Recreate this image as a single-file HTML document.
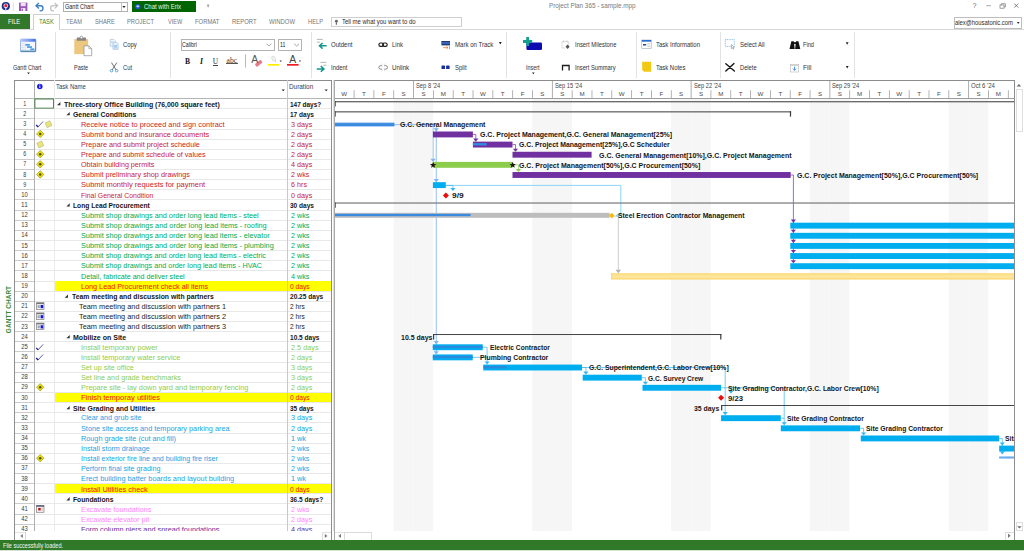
<!DOCTYPE html>
<html lang="en"><head><meta charset="utf-8"><title>Project Plan 365 - sample.mpp</title>
<style>
html,body{margin:0;padding:0;background:#fff;}
body{width:1024px;height:551px;overflow:hidden;font-family:"Liberation Sans",sans-serif;}
#app{position:relative;width:1024px;height:551px;overflow:hidden;background:#fff;}
.t{position:absolute;white-space:nowrap;transform-origin:left center;}
.r{position:absolute;}
svg{position:absolute;left:0;top:0;overflow:visible;}
.clip{position:absolute;overflow:hidden;}

</style></head>
<body>
<div id="app">
<svg width="1024" height="80">
<g transform="translate(0,0.4)"><!-- app logo -->
<circle cx="5.8" cy="5.8" r="4.1" fill="#1b2f8f"/>
<circle cx="5.8" cy="5.4" r="2.3" fill="#ffffff"/>
<circle cx="5.8" cy="5.3" r="1.6" fill="#e8202a"/>
<rect x="5.3" y="6.6" width="1" height="3" fill="#ffffff"/>
<rect x="12.9" y="2" width="0.6" height="8.6" fill="#c9c9c9"/>
<!-- save -->
<path d="M19 2.2 h8.4 v8.4 h-8.4z" fill="#9a55b8"/>
<rect x="20.7" y="2.2" width="5" height="3.6" fill="#efe2f5"/>
<rect x="21" y="7.6" width="4.4" height="3" fill="#f3e6f8"/>
<rect x="21.6" y="8.2" width="1.3" height="2.4" fill="#9a55b8"/>
<!-- undo -->
<path d="M36.2 5.3 h4.2 a2.6 2.6 0 0 1 0 5.2 h-0.8" fill="none" stroke="#3a7dc4" stroke-width="1.35"/>
<path d="M38.9 2.6 L36 5.3 L38.9 8" fill="none" stroke="#3a7dc4" stroke-width="1.35"/>
<!-- redo -->
<path d="M57.4 5.3 h-4.2 a2.6 2.6 0 0 0 0 5.2 h0.8" fill="none" stroke="#c2c2c2" stroke-width="1.25"/>
<path d="M54.7 2.6 L57.6 5.3 L54.7 8" fill="none" stroke="#c2c2c2" stroke-width="1.25"/>
</g></svg>
<div class="r" style="left:63.40px;top:1.50px;width:64.50px;height:10.60px;background:#ffffff;border:0.7px solid #b0b0b0;box-sizing:border-box;"></div>
<div class="r" style="left:120.60px;top:2.20px;width:0.60px;height:9.20px;background:#c0c0c0;"></div>
<div class="t" style="top:2.92px;font-size:6.9px;line-height:8.97px;color:#222;left:65.00px;transform:scaleX(0.8000);">Gantt Chart</div>
<svg width="1024" height="20"><path d="M122.4 6 h3.2 l-1.6 2z" fill="#222"/></svg>
<div class="r" style="left:131.90px;top:1.20px;width:64.00px;height:10.70px;background:#006400;"></div>
<svg width="1024" height="20"><circle cx="137.8" cy="6.6" r="2.7" fill="#2b50d8"/><ellipse cx="137.8" cy="6.3" rx="1.5" ry="1.1" fill="#bcd0ff"/><path d="M206.9 5.3 h2.4 l-1.2 2.2z" fill="#888"/><rect x="207.2" y="4.2" width="1.8" height="0.5" fill="#999"/></svg>
<div class="t" style="top:3.01px;font-size:6.9px;line-height:8.97px;color:#e8f3e8;left:144.00px;transform:scaleX(0.8703);">Chat with Erix</div>
<div class="t" style="top:1.64px;font-size:6.4px;line-height:8.32px;color:#7a7a7a;left:548.80px;transform:scaleX(0.9898);">Project Plan 365 - sample.mpp</div>
<div class="t" style="top:1.32px;font-size:7.2px;line-height:9.36px;color:#6a6a6a;left:824.60px;width:300px;text-align:center;"><span style="display:inline-block;transform-origin:center center;">?</span></div>
<svg width="1024" height="20">
<rect x="986.3" y="5.4" width="4.6" height="0.75" fill="#8a8a8a"/>
<rect x="1000" y="5" width="4" height="3.2" fill="#fff" stroke="#777" stroke-width="0.7"/>
<path d="M1001.4 5 v-1.3 h4 v3.2 h-1.4" fill="none" stroke="#777" stroke-width="0.7"/>
<path d="M1014.3 3.6 l4 4 M1018.3 3.6 l-4 4" stroke="#666" stroke-width="0.8"/>
</svg>
<div class="r" style="left:0.00px;top:13.80px;width:29.90px;height:16.00px;background:#31782a;"></div>
<div class="t" style="top:18.17px;font-size:6.5px;line-height:8.45px;color:#ffffff;left:8.20px;transform:scaleX(0.8883);">FILE</div>
<div class="r" style="left:0.00px;top:29.20px;width:1024.00px;height:0.70px;background:#d8d8d8;"></div>
<div class="r" style="left:32.60px;top:14.20px;width:27.00px;height:15.80px;background:#ffffff;border:0.7px solid #d0d0d0;border-bottom:none;box-sizing:border-box;"></div>
<div class="t" style="top:18.17px;font-size:6.5px;line-height:8.45px;color:#3b8a3b;left:38.80px;transform:scaleX(0.8970);">TASK</div>
<div class="t" style="top:18.17px;font-size:6.5px;line-height:8.45px;color:#767676;left:66.00px;transform:scaleX(0.8858);">TEAM</div>
<div class="t" style="top:18.17px;font-size:6.5px;line-height:8.45px;color:#767676;left:94.60px;transform:scaleX(0.8837);">SHARE</div>
<div class="t" style="top:18.17px;font-size:6.5px;line-height:8.45px;color:#767676;left:127.00px;transform:scaleX(0.8898);">PROJECT</div>
<div class="t" style="top:18.17px;font-size:6.5px;line-height:8.45px;color:#767676;left:167.50px;transform:scaleX(0.8602);">VIEW</div>
<div class="t" style="top:18.17px;font-size:6.5px;line-height:8.45px;color:#767676;left:194.60px;transform:scaleX(0.9048);">FORMAT</div>
<div class="t" style="top:18.17px;font-size:6.5px;line-height:8.45px;color:#767676;left:232.00px;transform:scaleX(0.9122);">REPORT</div>
<div class="t" style="top:18.17px;font-size:6.5px;line-height:8.45px;color:#767676;left:269.00px;transform:scaleX(0.9113);">WINDOW</div>
<div class="t" style="top:18.17px;font-size:6.5px;line-height:8.45px;color:#767676;left:307.60px;transform:scaleX(0.8832);">HELP</div>
<div class="r" style="left:331.40px;top:17.20px;width:130.80px;height:10.30px;background:#ffffff;border:0.7px solid #cfcfcf;box-sizing:border-box;"></div>
<svg width="1024" height="40"><circle cx="336.4" cy="21.2" r="1.45" fill="#666"/><rect x="335.8" y="22.4" width="1.2" height="2.3" fill="#666"/></svg>
<div class="t" style="top:18.08px;font-size:6.8px;line-height:8.84px;color:#2c2c2c;left:341.60px;transform:scaleX(0.8775);">Tell me what you want to do</div>
<div class="r" style="left:953.50px;top:17.20px;width:68.20px;height:11.40px;background:#ffffff;border:0.7px solid #bdbdbd;box-sizing:border-box;"></div>
<div class="t" style="top:18.95px;font-size:6.7px;line-height:8.71px;color:#2a2a2a;left:955.20px;transform:scaleX(0.8800);">alex@housatonic.com</div>
<svg width="1024" height="40"><path d="M1016.8 22 h2.8 l-1.4 2z" fill="#333"/></svg>
<div class="r" style="left:54.60px;top:31.60px;width:0.70px;height:46.00px;background:#e3e3e3;"></div>
<div class="r" style="left:169.70px;top:31.60px;width:0.70px;height:46.00px;background:#e3e3e3;"></div>
<div class="r" style="left:311.30px;top:31.60px;width:0.70px;height:46.00px;background:#e3e3e3;"></div>
<div class="r" style="left:505.70px;top:31.60px;width:0.70px;height:46.00px;background:#e3e3e3;"></div>
<div class="r" style="left:636.30px;top:31.60px;width:0.70px;height:46.00px;background:#e3e3e3;"></div>
<div class="r" style="left:720.40px;top:31.60px;width:0.70px;height:46.00px;background:#e3e3e3;"></div>
<div class="r" style="left:854.30px;top:31.60px;width:0.70px;height:46.00px;background:#e3e3e3;"></div>
<svg width="1024" height="80">
<defs><linearGradient id="gt" x1="0" x2="1" y1="0" y2="0"><stop offset="0" stop-color="#b9c8fa"/><stop offset="0.55" stop-color="#7f9cf2"/><stop offset="1" stop-color="#3f6ee8"/></linearGradient></defs>
<rect x="20.5" y="39.1" width="15.4" height="12.7" rx="1" fill="#f3f6fb" stroke="#5b8fd8" stroke-width="0.6"/>
<rect x="20.5" y="39.1" width="15.4" height="2.7" rx="0.8" fill="url(#gt)"/>
<rect x="20.6" y="50.6" width="15.2" height="1.2" fill="#3e7ca6"/>
<rect x="35.1" y="41.6" width="0.8" height="9.4" fill="#4a86d8"/>
<path d="M21.4 43.6 h3 M21.4 45.6 h3 M21.4 47.6 h3 M21.4 49.4 h3" stroke="#d0d4dc" stroke-width="0.6"/>
<rect x="24.9" y="42.4" width="0.4" height="8.2" fill="#d8d8d8"/>
<rect x="25.3" y="44" width="4.6" height="1.7" fill="#4a9fe6"/>
<rect x="27" y="46.2" width="5" height="1.7" fill="#4a9fe6"/>
<rect x="30.2" y="48.4" width="4.2" height="1.7" fill="#4a9fe6"/>
<path d="M27.2 72.4 h2.6 l-1.3 1.8z" fill="#222"/>
<!-- paste -->
<rect x="74.3" y="39.1" width="13.8" height="15" fill="#edc77e"/>
<rect x="76.8" y="37.6" width="9.2" height="3.2" rx="0.6" fill="#868686"/>
<circle cx="81.4" cy="37.5" r="1.3" fill="#fff" stroke="#868686" stroke-width="0.8"/>
<path d="M84 45.9 h4.9 l2.8 2.8 v7 h-7.7z" fill="#ffffff" stroke="#8c8c8c" stroke-width="0.7"/>
<path d="M88.9 45.9 v2.8 h2.8" fill="none" stroke="#8c8c8c" stroke-width="0.6"/>
<!-- copy -->
<path d="M110.2 39.4 h3.6 l1.5 1.5 v5.3 h-5.1z" fill="#f4f9ff" stroke="#9db7d6" stroke-width="0.6"/>
<path d="M113 42.3 h3.6 l1.5 1.5 v5.5 h-5.1z" fill="#eef6ff" stroke="#8fb0d6" stroke-width="0.6"/>
<path d="M113.9 45.3 h3.2 M113.9 46.6 h3.2 M113.9 47.9 h3.2" stroke="#5aa0dc" stroke-width="0.55"/>
<path d="M111 41.6 h2 M111 42.9 h1.4" stroke="#7db3e3" stroke-width="0.5"/>
<!-- cut -->
<path d="M111.5 62.6 L116.2 70 M116.8 62.6 L112.1 70" stroke="#444" stroke-width="0.75" fill="none"/>
<circle cx="111.5" cy="70.7" r="1.25" fill="none" stroke="#2e86c8" stroke-width="0.7"/>
<circle cx="116.7" cy="70.7" r="1.25" fill="none" stroke="#2e86c8" stroke-width="0.7"/>
</svg>
<div class="t" style="top:64.27px;font-size:6.9px;line-height:8.97px;color:#303030;left:13.00px;transform:scaleX(0.7972);">Gantt Chart</div>
<div class="t" style="top:64.27px;font-size:6.9px;line-height:8.97px;color:#303030;left:74.00px;transform:scaleX(0.7943);">Paste</div>
<div class="t" style="top:40.87px;font-size:6.9px;line-height:8.97px;color:#303030;left:122.80px;transform:scaleX(0.8575);">Copy</div>
<div class="t" style="top:63.86px;font-size:6.9px;line-height:8.97px;color:#303030;left:122.80px;transform:scaleX(0.8384);">Cut</div>
<div class="r" style="left:181.00px;top:39.20px;width:93.60px;height:11.40px;background:#ffffff;border:0.8px solid #b2b2b2;box-sizing:border-box;"></div>
<div class="r" style="left:278.00px;top:39.20px;width:24.00px;height:11.40px;background:#ffffff;border:0.8px solid #b2b2b2;box-sizing:border-box;"></div>
<div class="t" style="top:40.72px;font-size:6.9px;line-height:8.97px;color:#222;left:182.40px;transform:scaleX(0.7578);">Calibri</div>
<div class="t" style="top:40.72px;font-size:6.9px;line-height:8.97px;color:#222;left:279.60px;transform:scaleX(0.7546);">11</div>
<svg width="1024" height="80">
<path d="M266.6 43.8 l2.4 2.2 l2.4 -2.2" fill="none" stroke="#666" stroke-width="0.6"/>
<path d="M294.2 43.8 l2.4 2.2 l2.4 -2.2" fill="none" stroke="#666" stroke-width="0.6"/>
<rect x="245" y="54.4" width="0.7" height="13.2" fill="#9a9a9a"/>
<!-- clear formatting eraser -->
<rect x="255" y="61.6" width="7.4" height="3.5" rx="0.8" fill="#e8788e" transform="rotate(-40 258.7 63.3)"/>
<!-- fill -->
<path d="M271.4 57 l2.6 -1 l2 3.6 l-3 1.6z" fill="#f3f3f3" stroke="#c9c9c9" stroke-width="0.5"/>
<path d="M275.3 60 q1.4 1.4 0.6 2.4 q-1 0 -0.6 -2.4z" fill="#e8b37a"/>
<rect x="267.8" y="64" width="11.6" height="1.7" fill="#ffee00"/>
<path d="M279.6 60.6 h2.2 l-1.1 1.5z" fill="#333"/>
<rect x="287" y="64" width="11.6" height="1.7" fill="#ee1c25"/>
<path d="M298.8 60.6 h2.2 l-1.1 1.5z" fill="#333"/>
</svg>
<div class="t" style="top:56.66px;font-size:7.6px;line-height:9.88px;color:#111;font-weight:700;font-family:'Liberation Serif',serif;left:37.60px;width:300px;text-align:center;"><span style="display:inline-block;transform-origin:center center;">B</span></div>
<div class="t" style="top:56.66px;font-size:7.6px;line-height:9.88px;color:#111;font-weight:700;font-family:'Liberation Serif',serif;left:51.40px;width:300px;text-align:center;"><span style="display:inline-block;transform-origin:center center;font-style:italic;">I</span></div>
<div class="t" style="top:56.59px;font-size:7.4px;line-height:9.62px;color:#222;font-family:'Liberation Serif',serif;left:65.40px;width:300px;text-align:center;"><span style="display:inline-block;transform-origin:center center;">U</span></div>
<div class="r" style="left:212.60px;top:65.00px;width:5.60px;height:0.60px;background:#444;"></div>
<div class="t" style="top:56.26px;font-size:7.6px;line-height:9.88px;color:#3a3a3a;font-family:'Liberation Serif',serif;left:81.80px;width:300px;text-align:center;"><span style="display:inline-block;transform-origin:center center;">abc</span></div>
<div class="r" style="left:226.20px;top:62.90px;width:11.40px;height:0.60px;background:#555;"></div>
<div class="t" style="top:52.84px;font-size:10.4px;line-height:13.52px;color:#555;left:104.60px;width:300px;text-align:center;"><span style="display:inline-block;transform-origin:center center;">A</span></div>
<div class="t" style="top:52.84px;font-size:10.4px;line-height:13.52px;color:#444;left:142.60px;width:300px;text-align:center;"><span style="display:inline-block;transform-origin:center center;">A</span></div>
<svg width="1024" height="80">
<path d="M316.8 39.4 h6 M316.8 42.2 h3" stroke="#7a7a7a" stroke-width="0.55"/>
<path d="M326.6 45.8 h-6.4 M322.6 43 l-3.1 2.8 l3.1 2.8" fill="none" stroke="#10978c" stroke-width="1.5"/>
<path d="M320.4 62.4 h6 M323.4 65.2 h3" stroke="#7a7a7a" stroke-width="0.55"/>
<path d="M316.8 68.9 h6.4 M320.8 66.1 l3.1 2.8 l-3.1 2.8" fill="none" stroke="#10978c" stroke-width="1.5"/>
<!-- link -->
<rect x="378.9" y="43" width="4.6" height="3.3" rx="1.65" fill="none" stroke="#1c1c1c" stroke-width="1.15"/>
<rect x="382.6" y="43" width="4.6" height="3.3" rx="1.65" fill="none" stroke="#1c1c1c" stroke-width="1.15"/>
<!-- unlink -->
<path d="M382.2 65.7 h-1.6 a1.7 1.7 0 0 0 0 3.4 h1.6 M384.2 65.7 h1.6 a1.7 1.7 0 0 1 0 3.4 h-1.6" fill="none" stroke="#767676" stroke-width="0.85"/>
<path d="M381.6 63.6 l0.7 1.1 M385 63.6 l-0.7 1.1 M381.6 71.2 l0.7 -1.1 M385 71.2 l-0.7 -1.1" stroke="#b0b0b0" stroke-width="0.5"/>
<!-- mark on track -->
<rect x="441.4" y="41" width="8.6" height="4.4" fill="#1f3a7a"/>
<rect x="441.4" y="42.4" width="8.6" height="1.2" fill="#4d7fd6"/>
<path d="M443 47.6 h5 M446.4 46.3 l1.6 1.3 l-1.6 1.3" fill="none" stroke="#e07a1f" stroke-width="0.7"/>
<rect x="449" y="46" width="0.8" height="3.2" fill="#e07a1f"/>
<path d="M498.9 42.1 h2.8 l-1.4 2.4z" fill="#222"/>
<!-- split -->
<rect x="441.5" y="65.5" width="3.5" height="3.6" rx="0.6" fill="#1a2f9e"/>
<rect x="446.1" y="65.5" width="3.5" height="3.6" rx="0.6" fill="#1a2f9e"/>
</svg>
<div class="t" style="top:40.87px;font-size:6.9px;line-height:8.97px;color:#303030;left:330.60px;transform:scaleX(0.8724);">Outdent</div>
<div class="t" style="top:63.86px;font-size:6.9px;line-height:8.97px;color:#303030;left:330.60px;transform:scaleX(0.8554);">Indent</div>
<div class="t" style="top:40.87px;font-size:6.9px;line-height:8.97px;color:#303030;left:392.00px;transform:scaleX(0.8691);">Link</div>
<div class="t" style="top:63.86px;font-size:6.9px;line-height:8.97px;color:#303030;left:392.00px;transform:scaleX(0.8979);">Unlink</div>
<div class="t" style="top:40.87px;font-size:6.9px;line-height:8.97px;color:#303030;left:454.60px;transform:scaleX(0.8796);">Mark on Track</div>
<div class="t" style="top:63.86px;font-size:6.9px;line-height:8.97px;color:#303030;left:454.60px;transform:scaleX(0.8653);">Split</div>
<svg width="1024" height="80">
<rect x="526.4" y="42.6" width="15.6" height="7.4" rx="1.3" fill="#0c0cb2"/>
<path d="M527.6 36.9 v9.2 M523 41.5 h9.2" stroke="#14a08e" stroke-width="2.8"/>
<path d="M532 72.4 h2.6 l-1.3 1.8z" fill="#222"/>
<!-- insert milestone -->
<path d="M562 41.6 h6.6 v4 M562 41.6 v6.4 h3.4" fill="none" stroke="#c8c8c8" stroke-width="0.6"/>
<path d="M563.6 40.2 v2.2 M567 40.2 v2.2" stroke="#bbb" stroke-width="0.6"/>
<path d="M567.6 44.4 l2 2.3 l-2 2.3 l-2 -2.3z" fill="#555"/>
<!-- insert summary -->
<path d="M562.5 70.5 v-5 h6.6 v5" fill="none" stroke="#1e1e1e" stroke-width="1.3"/>
<!-- task information -->
<rect x="641.8" y="40" width="9.4" height="8.6" fill="#ffffff" stroke="#9aa7b8" stroke-width="0.6"/>
<rect x="641.8" y="40" width="9.4" height="1.7" fill="#2a6fd0"/>
<rect x="643" y="44" width="3.2" height="1.5" fill="#234c9c"/>
<path d="M647.2 43.4 h3 M647.2 45 h3 M647.2 46.6 h3" stroke="#b4b4b4" stroke-width="0.55"/>
<!-- task notes -->
<path d="M642.2 61.8 h8.8 v10 h-7 l-1.8 -1.8z" fill="#f2c811"/>
<!-- select all -->
<rect x="725.3" y="39.6" width="9" height="6.8" fill="none" stroke="#3b9ad8" stroke-width="0.6" stroke-dasharray="1 0.7"/>
<path d="M731.4 44.6 l0 4 l1 -0.9 l0.8 1.6 l0.7 -0.4 l-0.8 -1.5 l1.3 -0.2z" fill="#fff" stroke="#666" stroke-width="0.45"/>
<!-- delete -->
<path d="M725.8 63.8 l8.6 7.2 M734 63.6 l-8.2 7.4" stroke="#141414" stroke-width="1.4" stroke-linecap="round"/>
<!-- find -->
<path d="M791.4 41.2 h2.4 l0.9 7.8 h-5.2z M796 41.2 h2.4 l1.9 7.8 h-5.2z" fill="#141414"/>
<rect x="792.6" y="42.2" width="4.4" height="1.8" fill="#141414"/>
<path d="M845.8 42.3 h2.8 l-1.4 2.4z" fill="#222"/>
<!-- fill -->
<rect x="790.3" y="64.6" width="8.4" height="7.4" fill="#ffffff" stroke="#b9b9b9" stroke-width="0.6"/>
<rect x="790.3" y="64.6" width="8.4" height="1.3" fill="#d0d0d0"/>
<path d="M794.5 66.6 v3.6 M792.8 68.6 l1.7 1.8 l1.7 -1.8" fill="none" stroke="#2e7fd8" stroke-width="0.8"/>
<path d="M845.8 66 h2.8 l-1.4 2.4z" fill="#222"/>
</svg>
<div class="t" style="top:64.27px;font-size:6.9px;line-height:8.97px;color:#303030;left:525.60px;transform:scaleX(0.7891);">Insert</div>
<div class="t" style="top:40.87px;font-size:6.9px;line-height:8.97px;color:#303030;left:575.20px;transform:scaleX(0.8511);">Insert Milestone</div>
<div class="t" style="top:63.86px;font-size:6.9px;line-height:8.97px;color:#303030;left:575.20px;transform:scaleX(0.8347);">Insert Summary</div>
<div class="t" style="top:40.87px;font-size:6.9px;line-height:8.97px;color:#303030;left:656.00px;transform:scaleX(0.8702);">Task Information</div>
<div class="t" style="top:63.86px;font-size:6.9px;line-height:8.97px;color:#303030;left:656.00px;transform:scaleX(0.8623);">Task Notes</div>
<div class="t" style="top:40.87px;font-size:6.9px;line-height:8.97px;color:#303030;left:739.60px;transform:scaleX(0.8679);">Select All</div>
<div class="t" style="top:63.86px;font-size:6.9px;line-height:8.97px;color:#303030;left:739.60px;transform:scaleX(0.8333);">Delete</div>
<div class="t" style="top:40.87px;font-size:6.9px;line-height:8.97px;color:#303030;left:803.00px;transform:scaleX(0.8205);">Find</div>
<div class="t" style="top:64.27px;font-size:6.9px;line-height:8.97px;color:#303030;left:803.00px;transform:scaleX(0.9532);">Fill</div>
<div class="t" style="left:-42.4px;top:305px;width:100px;text-align:center;font-size:6.4px;line-height:9px;font-weight:700;color:#3a8a3a;transform:rotate(-90deg);transform-origin:center center;letter-spacing:0.1px;">GANTT CHART</div>
<div class="clip" style="left:0;top:0;width:334.2px;height:531.4px;">
<div class="r" style="left:14.40px;top:80.30px;width:317.10px;height:0.80px;background:#8c8c8c;"></div>
<div class="r" style="left:14.40px;top:98.10px;width:317.10px;height:0.70px;background:#b4b4b4;"></div>
<div class="r" style="left:14.40px;top:108.23px;width:20.00px;height:0.70px;background:#cbcbcb;"></div>
<div class="r" style="left:34.40px;top:108.23px;width:297.10px;height:0.70px;background:#e8e8e8;"></div>
<div class="r" style="left:14.40px;top:118.37px;width:20.00px;height:0.70px;background:#cbcbcb;"></div>
<div class="r" style="left:34.40px;top:118.37px;width:297.10px;height:0.70px;background:#e8e8e8;"></div>
<div class="r" style="left:14.40px;top:128.50px;width:20.00px;height:0.70px;background:#cbcbcb;"></div>
<div class="r" style="left:34.40px;top:128.50px;width:297.10px;height:0.70px;background:#e8e8e8;"></div>
<div class="r" style="left:14.40px;top:138.63px;width:20.00px;height:0.70px;background:#cbcbcb;"></div>
<div class="r" style="left:34.40px;top:138.63px;width:297.10px;height:0.70px;background:#e8e8e8;"></div>
<div class="r" style="left:14.40px;top:148.77px;width:20.00px;height:0.70px;background:#cbcbcb;"></div>
<div class="r" style="left:34.40px;top:148.77px;width:297.10px;height:0.70px;background:#e8e8e8;"></div>
<div class="r" style="left:14.40px;top:158.90px;width:20.00px;height:0.70px;background:#cbcbcb;"></div>
<div class="r" style="left:34.40px;top:158.90px;width:297.10px;height:0.70px;background:#e8e8e8;"></div>
<div class="r" style="left:14.40px;top:169.03px;width:20.00px;height:0.70px;background:#cbcbcb;"></div>
<div class="r" style="left:34.40px;top:169.03px;width:297.10px;height:0.70px;background:#e8e8e8;"></div>
<div class="r" style="left:14.40px;top:179.17px;width:20.00px;height:0.70px;background:#cbcbcb;"></div>
<div class="r" style="left:34.40px;top:179.17px;width:297.10px;height:0.70px;background:#e8e8e8;"></div>
<div class="r" style="left:14.40px;top:189.30px;width:20.00px;height:0.70px;background:#cbcbcb;"></div>
<div class="r" style="left:34.40px;top:189.30px;width:297.10px;height:0.70px;background:#e8e8e8;"></div>
<div class="r" style="left:14.40px;top:199.43px;width:20.00px;height:0.70px;background:#cbcbcb;"></div>
<div class="r" style="left:34.40px;top:199.43px;width:297.10px;height:0.70px;background:#e8e8e8;"></div>
<div class="r" style="left:14.40px;top:209.57px;width:20.00px;height:0.70px;background:#cbcbcb;"></div>
<div class="r" style="left:34.40px;top:209.57px;width:297.10px;height:0.70px;background:#e8e8e8;"></div>
<div class="r" style="left:14.40px;top:219.70px;width:20.00px;height:0.70px;background:#cbcbcb;"></div>
<div class="r" style="left:34.40px;top:219.70px;width:297.10px;height:0.70px;background:#e8e8e8;"></div>
<div class="r" style="left:14.40px;top:229.83px;width:20.00px;height:0.70px;background:#cbcbcb;"></div>
<div class="r" style="left:34.40px;top:229.83px;width:297.10px;height:0.70px;background:#e8e8e8;"></div>
<div class="r" style="left:14.40px;top:239.97px;width:20.00px;height:0.70px;background:#cbcbcb;"></div>
<div class="r" style="left:34.40px;top:239.97px;width:297.10px;height:0.70px;background:#e8e8e8;"></div>
<div class="r" style="left:14.40px;top:250.10px;width:20.00px;height:0.70px;background:#cbcbcb;"></div>
<div class="r" style="left:34.40px;top:250.10px;width:297.10px;height:0.70px;background:#e8e8e8;"></div>
<div class="r" style="left:14.40px;top:260.23px;width:20.00px;height:0.70px;background:#cbcbcb;"></div>
<div class="r" style="left:34.40px;top:260.23px;width:297.10px;height:0.70px;background:#e8e8e8;"></div>
<div class="r" style="left:14.40px;top:270.37px;width:20.00px;height:0.70px;background:#cbcbcb;"></div>
<div class="r" style="left:34.40px;top:270.37px;width:297.10px;height:0.70px;background:#e8e8e8;"></div>
<div class="r" style="left:14.40px;top:280.50px;width:20.00px;height:0.70px;background:#cbcbcb;"></div>
<div class="r" style="left:34.40px;top:280.50px;width:297.10px;height:0.70px;background:#e8e8e8;"></div>
<div class="r" style="left:54.40px;top:281.25px;width:277.10px;height:9.63px;background:#ffff00;"></div>
<div class="r" style="left:14.40px;top:290.63px;width:20.00px;height:0.70px;background:#cbcbcb;"></div>
<div class="r" style="left:34.40px;top:290.63px;width:297.10px;height:0.70px;background:#e8e8e8;"></div>
<div class="r" style="left:14.40px;top:300.77px;width:20.00px;height:0.70px;background:#cbcbcb;"></div>
<div class="r" style="left:34.40px;top:300.77px;width:297.10px;height:0.70px;background:#e8e8e8;"></div>
<div class="r" style="left:14.40px;top:310.90px;width:20.00px;height:0.70px;background:#cbcbcb;"></div>
<div class="r" style="left:34.40px;top:310.90px;width:297.10px;height:0.70px;background:#e8e8e8;"></div>
<div class="r" style="left:14.40px;top:321.03px;width:20.00px;height:0.70px;background:#cbcbcb;"></div>
<div class="r" style="left:34.40px;top:321.03px;width:297.10px;height:0.70px;background:#e8e8e8;"></div>
<div class="r" style="left:14.40px;top:331.17px;width:20.00px;height:0.70px;background:#cbcbcb;"></div>
<div class="r" style="left:34.40px;top:331.17px;width:297.10px;height:0.70px;background:#e8e8e8;"></div>
<div class="r" style="left:14.40px;top:341.30px;width:20.00px;height:0.70px;background:#cbcbcb;"></div>
<div class="r" style="left:34.40px;top:341.30px;width:297.10px;height:0.70px;background:#e8e8e8;"></div>
<div class="r" style="left:14.40px;top:351.43px;width:20.00px;height:0.70px;background:#cbcbcb;"></div>
<div class="r" style="left:34.40px;top:351.43px;width:297.10px;height:0.70px;background:#e8e8e8;"></div>
<div class="r" style="left:14.40px;top:361.57px;width:20.00px;height:0.70px;background:#cbcbcb;"></div>
<div class="r" style="left:34.40px;top:361.57px;width:297.10px;height:0.70px;background:#e8e8e8;"></div>
<div class="r" style="left:14.40px;top:371.70px;width:20.00px;height:0.70px;background:#cbcbcb;"></div>
<div class="r" style="left:34.40px;top:371.70px;width:297.10px;height:0.70px;background:#e8e8e8;"></div>
<div class="r" style="left:14.40px;top:381.83px;width:20.00px;height:0.70px;background:#cbcbcb;"></div>
<div class="r" style="left:34.40px;top:381.83px;width:297.10px;height:0.70px;background:#e8e8e8;"></div>
<div class="r" style="left:14.40px;top:391.97px;width:20.00px;height:0.70px;background:#cbcbcb;"></div>
<div class="r" style="left:34.40px;top:391.97px;width:297.10px;height:0.70px;background:#e8e8e8;"></div>
<div class="r" style="left:54.40px;top:392.72px;width:277.10px;height:9.63px;background:#ffff00;"></div>
<div class="r" style="left:14.40px;top:402.10px;width:20.00px;height:0.70px;background:#cbcbcb;"></div>
<div class="r" style="left:34.40px;top:402.10px;width:297.10px;height:0.70px;background:#e8e8e8;"></div>
<div class="r" style="left:14.40px;top:412.23px;width:20.00px;height:0.70px;background:#cbcbcb;"></div>
<div class="r" style="left:34.40px;top:412.23px;width:297.10px;height:0.70px;background:#e8e8e8;"></div>
<div class="r" style="left:14.40px;top:422.37px;width:20.00px;height:0.70px;background:#cbcbcb;"></div>
<div class="r" style="left:34.40px;top:422.37px;width:297.10px;height:0.70px;background:#e8e8e8;"></div>
<div class="r" style="left:14.40px;top:432.50px;width:20.00px;height:0.70px;background:#cbcbcb;"></div>
<div class="r" style="left:34.40px;top:432.50px;width:297.10px;height:0.70px;background:#e8e8e8;"></div>
<div class="r" style="left:14.40px;top:442.63px;width:20.00px;height:0.70px;background:#cbcbcb;"></div>
<div class="r" style="left:34.40px;top:442.63px;width:297.10px;height:0.70px;background:#e8e8e8;"></div>
<div class="r" style="left:14.40px;top:452.77px;width:20.00px;height:0.70px;background:#cbcbcb;"></div>
<div class="r" style="left:34.40px;top:452.77px;width:297.10px;height:0.70px;background:#e8e8e8;"></div>
<div class="r" style="left:14.40px;top:462.90px;width:20.00px;height:0.70px;background:#cbcbcb;"></div>
<div class="r" style="left:34.40px;top:462.90px;width:297.10px;height:0.70px;background:#e8e8e8;"></div>
<div class="r" style="left:14.40px;top:473.03px;width:20.00px;height:0.70px;background:#cbcbcb;"></div>
<div class="r" style="left:34.40px;top:473.03px;width:297.10px;height:0.70px;background:#e8e8e8;"></div>
<div class="r" style="left:14.40px;top:483.17px;width:20.00px;height:0.70px;background:#cbcbcb;"></div>
<div class="r" style="left:34.40px;top:483.17px;width:297.10px;height:0.70px;background:#e8e8e8;"></div>
<div class="r" style="left:54.40px;top:483.92px;width:277.10px;height:9.63px;background:#ffff00;"></div>
<div class="r" style="left:14.40px;top:493.30px;width:20.00px;height:0.70px;background:#cbcbcb;"></div>
<div class="r" style="left:34.40px;top:493.30px;width:297.10px;height:0.70px;background:#e8e8e8;"></div>
<div class="r" style="left:14.40px;top:503.43px;width:20.00px;height:0.70px;background:#cbcbcb;"></div>
<div class="r" style="left:34.40px;top:503.43px;width:297.10px;height:0.70px;background:#e8e8e8;"></div>
<div class="r" style="left:14.40px;top:513.57px;width:20.00px;height:0.70px;background:#cbcbcb;"></div>
<div class="r" style="left:34.40px;top:513.57px;width:297.10px;height:0.70px;background:#e8e8e8;"></div>
<div class="r" style="left:14.40px;top:523.70px;width:20.00px;height:0.70px;background:#cbcbcb;"></div>
<div class="r" style="left:34.40px;top:523.70px;width:297.10px;height:0.70px;background:#e8e8e8;"></div>
<div class="r" style="left:14.40px;top:533.83px;width:20.00px;height:0.70px;background:#cbcbcb;"></div>
<div class="r" style="left:34.40px;top:533.83px;width:297.10px;height:0.70px;background:#e8e8e8;"></div>
<div class="r" style="left:34.10px;top:80.30px;width:0.70px;height:470.00px;background:#b0b0b0;"></div>
<div class="r" style="left:53.70px;top:80.30px;width:0.60px;height:470.00px;background:#ebebeb;"></div>
<div class="r" style="left:287.00px;top:80.30px;width:0.60px;height:470.00px;background:#c9c9c9;"></div>
<div class="r" style="left:332.90px;top:80.30px;width:0.50px;height:470.00px;background:#dedede;"></div>
<svg width="340" height="110"><circle cx="39.8" cy="86.4" r="2.75" fill="#1515e6"/><rect x="39.35" y="85.8" width="0.95" height="2.3" fill="#fff"/><rect x="39.35" y="84.4" width="0.95" height="0.9" fill="#fff"/><path d="M281.6 89.6 h3.2 l-1.6 1.7z" fill="#222"/><path d="M324.6 89.6 h3.2 l-1.6 1.7z" fill="#222"/></svg>
<div class="t" style="top:82.25px;font-size:7.0px;line-height:9.1px;color:#3a3a4a;left:55.80px;transform:scaleX(0.8510);">Task Name</div>
<div class="t" style="top:82.25px;font-size:7.0px;line-height:9.1px;color:#3a3a4a;left:289.20px;transform:scaleX(0.9143);">Duration</div>
<div class="t" style="top:99.69px;font-size:6.5px;line-height:8.45px;color:#3c3c3c;left:-125.70px;width:300px;text-align:center;"><span style="display:inline-block;transform-origin:center center;transform:scaleX(0.8276);">1</span></div>
<div class="t" style="top:99.56px;font-size:7.4px;line-height:9.62px;color:#151515;font-weight:700;left:64.10px;transform:scaleX(0.9360);">Three-story Office Building (76,000 square feet)</div>
<div class="t" style="top:99.56px;font-size:7.4px;line-height:9.62px;color:#151515;font-weight:700;left:290.20px;transform:scaleX(0.8727);">147 days?</div>
<div class="t" style="top:109.82px;font-size:6.5px;line-height:8.45px;color:#3c3c3c;left:-125.70px;width:300px;text-align:center;"><span style="display:inline-block;transform-origin:center center;transform:scaleX(0.8276);">2</span></div>
<div class="t" style="top:109.69px;font-size:7.4px;line-height:9.62px;color:#151515;font-weight:700;left:73.40px;transform:scaleX(0.9300);">General Conditions</div>
<div class="t" style="top:109.69px;font-size:7.4px;line-height:9.62px;color:#151515;font-weight:700;left:290.20px;transform:scaleX(0.8811);">17 days</div>
<div class="t" style="top:119.96px;font-size:6.5px;line-height:8.45px;color:#3c3c3c;left:-125.70px;width:300px;text-align:center;"><span style="display:inline-block;transform-origin:center center;transform:scaleX(0.8276);">3</span></div>
<div class="t" style="top:119.59px;font-size:7.3px;line-height:9.49px;color:#c8252b;left:81.30px;transform:scaleX(1.0108);">Receive notice to proceed and sign contract</div>
<div class="t" style="top:119.59px;font-size:7.3px;line-height:9.49px;color:#c8252b;left:290.50px;transform:scaleX(0.9907);">3 days</div>
<div class="t" style="top:130.09px;font-size:6.5px;line-height:8.45px;color:#3c3c3c;left:-125.70px;width:300px;text-align:center;"><span style="display:inline-block;transform-origin:center center;transform:scaleX(0.8276);">4</span></div>
<div class="t" style="top:129.72px;font-size:7.3px;line-height:9.49px;color:#c8252b;left:81.30px;transform:scaleX(1.0129);">Submit bond and insurance documents</div>
<div class="t" style="top:129.72px;font-size:7.3px;line-height:9.49px;color:#c8252b;left:290.50px;transform:scaleX(0.9907);">2 days</div>
<div class="t" style="top:140.22px;font-size:6.5px;line-height:8.45px;color:#3c3c3c;left:-125.70px;width:300px;text-align:center;"><span style="display:inline-block;transform-origin:center center;transform:scaleX(0.8276);">5</span></div>
<div class="t" style="top:139.85px;font-size:7.3px;line-height:9.49px;color:#c8252b;left:81.30px;transform:scaleX(1.0003);">Prepare and submit project schedule</div>
<div class="t" style="top:139.85px;font-size:7.3px;line-height:9.49px;color:#c8252b;left:290.50px;transform:scaleX(0.9907);">2 days</div>
<div class="t" style="top:150.36px;font-size:6.5px;line-height:8.45px;color:#3c3c3c;left:-125.70px;width:300px;text-align:center;"><span style="display:inline-block;transform-origin:center center;transform:scaleX(0.8276);">6</span></div>
<div class="t" style="top:149.99px;font-size:7.3px;line-height:9.49px;color:#c8252b;left:81.30px;transform:scaleX(0.9877);">Prepare and submit schedule of values</div>
<div class="t" style="top:149.99px;font-size:7.3px;line-height:9.49px;color:#c8252b;left:290.50px;transform:scaleX(0.9907);">2 days</div>
<div class="t" style="top:160.49px;font-size:6.5px;line-height:8.45px;color:#3c3c3c;left:-125.70px;width:300px;text-align:center;"><span style="display:inline-block;transform-origin:center center;transform:scaleX(0.8276);">7</span></div>
<div class="t" style="top:160.12px;font-size:7.3px;line-height:9.49px;color:#c8252b;left:81.30px;transform:scaleX(0.9834);">Obtain building permits</div>
<div class="t" style="top:160.12px;font-size:7.3px;line-height:9.49px;color:#c8252b;left:290.50px;transform:scaleX(0.9907);">4 days</div>
<div class="t" style="top:170.62px;font-size:6.5px;line-height:8.45px;color:#3c3c3c;left:-125.70px;width:300px;text-align:center;"><span style="display:inline-block;transform-origin:center center;transform:scaleX(0.8276);">8</span></div>
<div class="t" style="top:170.25px;font-size:7.3px;line-height:9.49px;color:#c8252b;left:81.30px;transform:scaleX(0.9954);">Submit preliminary shop drawings</div>
<div class="t" style="top:170.25px;font-size:7.3px;line-height:9.49px;color:#c8252b;left:290.50px;transform:scaleX(0.9809);">2 wks</div>
<div class="t" style="top:180.76px;font-size:6.5px;line-height:8.45px;color:#3c3c3c;left:-125.70px;width:300px;text-align:center;"><span style="display:inline-block;transform-origin:center center;transform:scaleX(0.8276);">9</span></div>
<div class="t" style="top:180.39px;font-size:7.3px;line-height:9.49px;color:#c8252b;left:81.30px;transform:scaleX(1.0276);">Submit monthly requests for payment</div>
<div class="t" style="top:180.39px;font-size:7.3px;line-height:9.49px;color:#c8252b;left:290.50px;transform:scaleX(0.9856);">6 hrs</div>
<div class="t" style="top:190.89px;font-size:6.5px;line-height:8.45px;color:#3c3c3c;left:-125.70px;width:300px;text-align:center;"><span style="display:inline-block;transform-origin:center center;transform:scaleX(0.9123);">10</span></div>
<div class="t" style="top:190.52px;font-size:7.3px;line-height:9.49px;color:#c8252b;left:81.30px;transform:scaleX(0.9443);">Final General Condition</div>
<div class="t" style="top:190.52px;font-size:7.3px;line-height:9.49px;color:#c8252b;left:290.50px;transform:scaleX(0.9907);">0 days</div>
<div class="t" style="top:201.02px;font-size:6.5px;line-height:8.45px;color:#3c3c3c;left:-125.70px;width:300px;text-align:center;"><span style="display:inline-block;transform-origin:center center;transform:scaleX(0.9778);">11</span></div>
<div class="t" style="top:200.89px;font-size:7.4px;line-height:9.62px;color:#151515;font-weight:700;left:73.40px;transform:scaleX(0.9022);">Long Lead Procurement</div>
<div class="t" style="top:200.89px;font-size:7.4px;line-height:9.62px;color:#151515;font-weight:700;left:290.20px;transform:scaleX(0.8811);">30 days</div>
<div class="t" style="top:211.16px;font-size:6.5px;line-height:8.45px;color:#3c3c3c;left:-125.70px;width:300px;text-align:center;"><span style="display:inline-block;transform-origin:center center;transform:scaleX(0.9123);">12</span></div>
<div class="t" style="top:210.79px;font-size:7.3px;line-height:9.49px;color:#00ac50;left:81.30px;transform:scaleX(0.9980);">Submit shop drawings and order long lead items - steel</div>
<div class="t" style="top:210.79px;font-size:7.3px;line-height:9.49px;color:#00ac50;left:290.50px;transform:scaleX(0.9809);">2 wks</div>
<div class="t" style="top:221.29px;font-size:6.5px;line-height:8.45px;color:#3c3c3c;left:-125.70px;width:300px;text-align:center;"><span style="display:inline-block;transform-origin:center center;transform:scaleX(0.9123);">13</span></div>
<div class="t" style="top:220.92px;font-size:7.3px;line-height:9.49px;color:#00ac50;left:81.30px;transform:scaleX(1.0040);">Submit shop drawings and order long lead items - roofing</div>
<div class="t" style="top:220.92px;font-size:7.3px;line-height:9.49px;color:#00ac50;left:290.50px;transform:scaleX(0.9809);">2 wks</div>
<div class="t" style="top:231.42px;font-size:6.5px;line-height:8.45px;color:#3c3c3c;left:-125.70px;width:300px;text-align:center;"><span style="display:inline-block;transform-origin:center center;transform:scaleX(0.9123);">14</span></div>
<div class="t" style="top:231.05px;font-size:7.3px;line-height:9.49px;color:#00ac50;left:81.30px;transform:scaleX(1.0005);">Submit shop drawings and order long lead items - elevator</div>
<div class="t" style="top:231.05px;font-size:7.3px;line-height:9.49px;color:#00ac50;left:290.50px;transform:scaleX(0.9809);">2 wks</div>
<div class="t" style="top:241.56px;font-size:6.5px;line-height:8.45px;color:#3c3c3c;left:-125.70px;width:300px;text-align:center;"><span style="display:inline-block;transform-origin:center center;transform:scaleX(0.9123);">15</span></div>
<div class="t" style="top:241.19px;font-size:7.3px;line-height:9.49px;color:#00ac50;left:81.30px;transform:scaleX(1.0023);">Submit shop drawings and order long lead items - plumbing</div>
<div class="t" style="top:241.19px;font-size:7.3px;line-height:9.49px;color:#00ac50;left:290.50px;transform:scaleX(0.9809);">2 wks</div>
<div class="t" style="top:251.69px;font-size:6.5px;line-height:8.45px;color:#3c3c3c;left:-125.70px;width:300px;text-align:center;"><span style="display:inline-block;transform-origin:center center;transform:scaleX(0.9123);">16</span></div>
<div class="t" style="top:251.32px;font-size:7.3px;line-height:9.49px;color:#00ac50;left:81.30px;transform:scaleX(0.9959);">Submit shop drawings and order long lead items - electric</div>
<div class="t" style="top:251.32px;font-size:7.3px;line-height:9.49px;color:#00ac50;left:290.50px;transform:scaleX(0.9809);">2 wks</div>
<div class="t" style="top:261.82px;font-size:6.5px;line-height:8.45px;color:#3c3c3c;left:-125.70px;width:300px;text-align:center;"><span style="display:inline-block;transform-origin:center center;transform:scaleX(0.9123);">17</span></div>
<div class="t" style="top:261.45px;font-size:7.3px;line-height:9.49px;color:#00ac50;left:81.30px;transform:scaleX(0.9924);">Submit shop drawings and order long lead items - HVAC</div>
<div class="t" style="top:261.45px;font-size:7.3px;line-height:9.49px;color:#00ac50;left:290.50px;transform:scaleX(0.9809);">2 wks</div>
<div class="t" style="top:271.96px;font-size:6.5px;line-height:8.45px;color:#3c3c3c;left:-125.70px;width:300px;text-align:center;"><span style="display:inline-block;transform-origin:center center;transform:scaleX(0.9123);">18</span></div>
<div class="t" style="top:271.59px;font-size:7.3px;line-height:9.49px;color:#00ac50;left:81.30px;transform:scaleX(0.9795);">Detail, fabricate and deliver steel</div>
<div class="t" style="top:271.59px;font-size:7.3px;line-height:9.49px;color:#00ac50;left:290.50px;transform:scaleX(0.9809);">4 wks</div>
<div class="t" style="top:282.09px;font-size:6.5px;line-height:8.45px;color:#3c3c3c;left:-125.70px;width:300px;text-align:center;"><span style="display:inline-block;transform-origin:center center;transform:scaleX(0.9123);">19</span></div>
<div class="t" style="top:281.92px;font-size:7.0px;line-height:9.1px;color:#f01010;left:80.70px;transform:scaleX(1.0344);">Long Lead Procurement check all items</div>
<div class="t" style="top:281.92px;font-size:7.0px;line-height:9.1px;color:#f01010;left:290.40px;transform:scaleX(0.9552);">0 days</div>
<div class="t" style="top:292.22px;font-size:6.5px;line-height:8.45px;color:#3c3c3c;left:-125.70px;width:300px;text-align:center;"><span style="display:inline-block;transform-origin:center center;transform:scaleX(0.9123);">20</span></div>
<div class="t" style="top:292.09px;font-size:7.4px;line-height:9.62px;color:#151515;font-weight:700;left:71.70px;transform:scaleX(0.9240);">Team meeting and discussion with partners</div>
<div class="t" style="top:292.09px;font-size:7.4px;line-height:9.62px;color:#151515;font-weight:700;left:290.20px;transform:scaleX(0.8876);">20.25 days</div>
<div class="t" style="top:302.36px;font-size:6.5px;line-height:8.45px;color:#3c3c3c;left:-125.70px;width:300px;text-align:center;"><span style="display:inline-block;transform-origin:center center;transform:scaleX(0.9123);">21</span></div>
<div class="t" style="top:302.05px;font-size:7.2px;line-height:9.36px;color:#1c1c1c;left:79.00px;transform:scaleX(1.0227);">Team meeting and discussion with partners 1</div>
<div class="t" style="top:302.05px;font-size:7.2px;line-height:9.36px;color:#1c1c1c;left:290.40px;transform:scaleX(0.9196);">2 hrs</div>
<div class="t" style="top:312.49px;font-size:6.5px;line-height:8.45px;color:#3c3c3c;left:-125.70px;width:300px;text-align:center;"><span style="display:inline-block;transform-origin:center center;transform:scaleX(0.9123);">22</span></div>
<div class="t" style="top:312.19px;font-size:7.2px;line-height:9.36px;color:#1c1c1c;left:79.00px;transform:scaleX(1.0227);">Team meeting and discussion with partners 2</div>
<div class="t" style="top:312.19px;font-size:7.2px;line-height:9.36px;color:#1c1c1c;left:290.40px;transform:scaleX(0.9196);">2 hrs</div>
<div class="t" style="top:322.62px;font-size:6.5px;line-height:8.45px;color:#3c3c3c;left:-125.70px;width:300px;text-align:center;"><span style="display:inline-block;transform-origin:center center;transform:scaleX(0.9123);">23</span></div>
<div class="t" style="top:322.32px;font-size:7.2px;line-height:9.36px;color:#1c1c1c;left:79.00px;transform:scaleX(1.0227);">Team meeting and discussion with partners 3</div>
<div class="t" style="top:322.32px;font-size:7.2px;line-height:9.36px;color:#1c1c1c;left:290.40px;transform:scaleX(0.9196);">2 hrs</div>
<div class="t" style="top:332.76px;font-size:6.5px;line-height:8.45px;color:#3c3c3c;left:-125.70px;width:300px;text-align:center;"><span style="display:inline-block;transform-origin:center center;transform:scaleX(0.9123);">24</span></div>
<div class="t" style="top:332.62px;font-size:7.4px;line-height:9.62px;color:#151515;font-weight:700;left:73.40px;transform:scaleX(0.9509);">Mobilize on Site</div>
<div class="t" style="top:332.62px;font-size:7.4px;line-height:9.62px;color:#151515;font-weight:700;left:290.20px;transform:scaleX(0.8860);">10.5 days</div>
<div class="t" style="top:342.89px;font-size:6.5px;line-height:8.45px;color:#3c3c3c;left:-125.70px;width:300px;text-align:center;"><span style="display:inline-block;transform-origin:center center;transform:scaleX(0.9123);">25</span></div>
<div class="t" style="top:342.52px;font-size:7.3px;line-height:9.49px;color:#8fce4a;left:81.30px;transform:scaleX(1.0113);">Install temporary power</div>
<div class="t" style="top:342.52px;font-size:7.3px;line-height:9.49px;color:#8fce4a;left:290.50px;transform:scaleX(1.0002);">2.5 days</div>
<div class="t" style="top:353.02px;font-size:6.5px;line-height:8.45px;color:#3c3c3c;left:-125.70px;width:300px;text-align:center;"><span style="display:inline-block;transform-origin:center center;transform:scaleX(0.9123);">26</span></div>
<div class="t" style="top:352.65px;font-size:7.3px;line-height:9.49px;color:#8fce4a;left:81.30px;transform:scaleX(1.0035);">Install temporary water service</div>
<div class="t" style="top:352.65px;font-size:7.3px;line-height:9.49px;color:#8fce4a;left:290.50px;transform:scaleX(0.9907);">2 days</div>
<div class="t" style="top:363.16px;font-size:6.5px;line-height:8.45px;color:#3c3c3c;left:-125.70px;width:300px;text-align:center;"><span style="display:inline-block;transform-origin:center center;transform:scaleX(0.9123);">27</span></div>
<div class="t" style="top:362.79px;font-size:7.3px;line-height:9.49px;color:#8fce4a;left:81.30px;transform:scaleX(0.9809);">Set up site office</div>
<div class="t" style="top:362.79px;font-size:7.3px;line-height:9.49px;color:#8fce4a;left:290.50px;transform:scaleX(0.9907);">3 days</div>
<div class="t" style="top:373.29px;font-size:6.5px;line-height:8.45px;color:#3c3c3c;left:-125.70px;width:300px;text-align:center;"><span style="display:inline-block;transform-origin:center center;transform:scaleX(0.9123);">28</span></div>
<div class="t" style="top:372.92px;font-size:7.3px;line-height:9.49px;color:#8fce4a;left:81.30px;transform:scaleX(0.9899);">Set line and grade benchmarks</div>
<div class="t" style="top:372.92px;font-size:7.3px;line-height:9.49px;color:#8fce4a;left:290.50px;transform:scaleX(0.9907);">3 days</div>
<div class="t" style="top:383.42px;font-size:6.5px;line-height:8.45px;color:#3c3c3c;left:-125.70px;width:300px;text-align:center;"><span style="display:inline-block;transform-origin:center center;transform:scaleX(0.9123);">29</span></div>
<div class="t" style="top:383.05px;font-size:7.3px;line-height:9.49px;color:#8fce4a;left:81.30px;transform:scaleX(1.0116);">Prepare site - lay down yard and temporary fencing</div>
<div class="t" style="top:383.05px;font-size:7.3px;line-height:9.49px;color:#8fce4a;left:290.50px;transform:scaleX(0.9907);">2 days</div>
<div class="t" style="top:393.56px;font-size:6.5px;line-height:8.45px;color:#3c3c3c;left:-125.70px;width:300px;text-align:center;"><span style="display:inline-block;transform-origin:center center;transform:scaleX(0.9123);">30</span></div>
<div class="t" style="top:393.38px;font-size:7.0px;line-height:9.1px;color:#f01010;left:80.70px;transform:scaleX(1.0801);">Finish temporay utilities</div>
<div class="t" style="top:393.38px;font-size:7.0px;line-height:9.1px;color:#f01010;left:290.40px;transform:scaleX(0.9552);">0 days</div>
<div class="t" style="top:403.69px;font-size:6.5px;line-height:8.45px;color:#3c3c3c;left:-125.70px;width:300px;text-align:center;"><span style="display:inline-block;transform-origin:center center;transform:scaleX(0.9123);">31</span></div>
<div class="t" style="top:403.56px;font-size:7.4px;line-height:9.62px;color:#151515;font-weight:700;left:73.40px;transform:scaleX(0.9330);">Site Grading and Utilities</div>
<div class="t" style="top:403.56px;font-size:7.4px;line-height:9.62px;color:#151515;font-weight:700;left:290.20px;transform:scaleX(0.8700);">35 days</div>
<div class="t" style="top:413.82px;font-size:6.5px;line-height:8.45px;color:#3c3c3c;left:-125.70px;width:300px;text-align:center;"><span style="display:inline-block;transform-origin:center center;transform:scaleX(0.9123);">32</span></div>
<div class="t" style="top:413.45px;font-size:7.3px;line-height:9.49px;color:#1ba3e4;left:81.30px;transform:scaleX(0.9812);">Clear and grub site</div>
<div class="t" style="top:413.45px;font-size:7.3px;line-height:9.49px;color:#1ba3e4;left:290.50px;transform:scaleX(0.9907);">3 days</div>
<div class="t" style="top:423.96px;font-size:6.5px;line-height:8.45px;color:#3c3c3c;left:-125.70px;width:300px;text-align:center;"><span style="display:inline-block;transform-origin:center center;transform:scaleX(0.9123);">33</span></div>
<div class="t" style="top:423.59px;font-size:7.3px;line-height:9.49px;color:#1ba3e4;left:81.30px;transform:scaleX(0.9976);">Stone site access and temporary parking area</div>
<div class="t" style="top:423.59px;font-size:7.3px;line-height:9.49px;color:#1ba3e4;left:290.50px;transform:scaleX(0.9907);">2 days</div>
<div class="t" style="top:434.09px;font-size:6.5px;line-height:8.45px;color:#3c3c3c;left:-125.70px;width:300px;text-align:center;"><span style="display:inline-block;transform-origin:center center;transform:scaleX(0.9123);">34</span></div>
<div class="t" style="top:433.72px;font-size:7.3px;line-height:9.49px;color:#1ba3e4;left:81.30px;transform:scaleX(0.9966);">Rough grade site (cut and fill)</div>
<div class="t" style="top:433.72px;font-size:7.3px;line-height:9.49px;color:#1ba3e4;left:290.50px;transform:scaleX(0.9990);">1 wk</div>
<div class="t" style="top:444.22px;font-size:6.5px;line-height:8.45px;color:#3c3c3c;left:-125.70px;width:300px;text-align:center;"><span style="display:inline-block;transform-origin:center center;transform:scaleX(0.9123);">35</span></div>
<div class="t" style="top:443.85px;font-size:7.3px;line-height:9.49px;color:#1ba3e4;left:81.30px;transform:scaleX(0.9862);">Install storm drainage</div>
<div class="t" style="top:443.85px;font-size:7.3px;line-height:9.49px;color:#1ba3e4;left:290.50px;transform:scaleX(0.9809);">2 wks</div>
<div class="t" style="top:454.36px;font-size:6.5px;line-height:8.45px;color:#3c3c3c;left:-125.70px;width:300px;text-align:center;"><span style="display:inline-block;transform-origin:center center;transform:scaleX(0.9123);">36</span></div>
<div class="t" style="top:453.99px;font-size:7.3px;line-height:9.49px;color:#1ba3e4;left:81.30px;transform:scaleX(0.9720);">Install exterior fire line and building fire riser</div>
<div class="t" style="top:453.99px;font-size:7.3px;line-height:9.49px;color:#1ba3e4;left:290.50px;transform:scaleX(0.9809);">2 wks</div>
<div class="t" style="top:464.49px;font-size:6.5px;line-height:8.45px;color:#3c3c3c;left:-125.70px;width:300px;text-align:center;"><span style="display:inline-block;transform-origin:center center;transform:scaleX(0.9123);">37</span></div>
<div class="t" style="top:464.12px;font-size:7.3px;line-height:9.49px;color:#1ba3e4;left:81.30px;transform:scaleX(0.9787);">Perform final site grading</div>
<div class="t" style="top:464.12px;font-size:7.3px;line-height:9.49px;color:#1ba3e4;left:290.50px;transform:scaleX(0.9809);">2 wks</div>
<div class="t" style="top:474.62px;font-size:6.5px;line-height:8.45px;color:#3c3c3c;left:-125.70px;width:300px;text-align:center;"><span style="display:inline-block;transform-origin:center center;transform:scaleX(0.9123);">38</span></div>
<div class="t" style="top:474.25px;font-size:7.3px;line-height:9.49px;color:#1ba3e4;left:81.30px;transform:scaleX(1.0064);">Erect building batter boards and layout building</div>
<div class="t" style="top:474.25px;font-size:7.3px;line-height:9.49px;color:#1ba3e4;left:290.50px;transform:scaleX(0.9990);">1 wk</div>
<div class="t" style="top:484.76px;font-size:6.5px;line-height:8.45px;color:#3c3c3c;left:-125.70px;width:300px;text-align:center;"><span style="display:inline-block;transform-origin:center center;transform:scaleX(0.9123);">39</span></div>
<div class="t" style="top:484.58px;font-size:7.0px;line-height:9.1px;color:#f01010;left:80.70px;transform:scaleX(1.0582);">Install Utilities check</div>
<div class="t" style="top:484.58px;font-size:7.0px;line-height:9.1px;color:#f01010;left:290.40px;transform:scaleX(0.9552);">0 days</div>
<div class="t" style="top:494.89px;font-size:6.5px;line-height:8.45px;color:#3c3c3c;left:-125.70px;width:300px;text-align:center;"><span style="display:inline-block;transform-origin:center center;transform:scaleX(0.9123);">40</span></div>
<div class="t" style="top:494.76px;font-size:7.4px;line-height:9.62px;color:#151515;font-weight:700;left:73.40px;transform:scaleX(0.9133);">Foundations</div>
<div class="t" style="top:494.76px;font-size:7.4px;line-height:9.62px;color:#151515;font-weight:700;left:290.20px;transform:scaleX(0.8780);">36.5 days?</div>
<div class="t" style="top:505.02px;font-size:6.5px;line-height:8.45px;color:#3c3c3c;left:-125.70px;width:300px;text-align:center;"><span style="display:inline-block;transform-origin:center center;transform:scaleX(0.9123);">41</span></div>
<div class="t" style="top:504.65px;font-size:7.3px;line-height:9.49px;color:#ff86ff;left:81.30px;transform:scaleX(1.0089);">Excavate foundations</div>
<div class="t" style="top:504.65px;font-size:7.3px;line-height:9.49px;color:#ff86ff;left:290.50px;transform:scaleX(0.9809);">2 wks</div>
<div class="t" style="top:515.16px;font-size:6.5px;line-height:8.45px;color:#3c3c3c;left:-125.70px;width:300px;text-align:center;"><span style="display:inline-block;transform-origin:center center;transform:scaleX(0.9123);">42</span></div>
<div class="t" style="top:514.79px;font-size:7.3px;line-height:9.49px;color:#ff86ff;left:81.30px;transform:scaleX(1.0096);">Excavate elevator pit</div>
<div class="t" style="top:514.79px;font-size:7.3px;line-height:9.49px;color:#ff86ff;left:290.50px;transform:scaleX(0.9907);">2 days</div>
<div class="t" style="top:525.29px;font-size:6.5px;line-height:8.45px;color:#3c3c3c;left:-125.70px;width:300px;text-align:center;"><span style="display:inline-block;transform-origin:center center;transform:scaleX(0.9123);">43</span></div>
<div class="t" style="top:524.92px;font-size:7.3px;line-height:9.49px;color:#6a2c9c;left:81.30px;transform:scaleX(0.9984);">Form column piers and spread foundations</div>
<div class="t" style="top:524.92px;font-size:7.3px;line-height:9.49px;color:#6a2c9c;left:290.50px;transform:scaleX(0.9907);">4 days</div>
<svg width="340" height="531.4"><path d="M60.40 101.92 v3.3 h-3.3z" fill="#2e2e2e"/><rect x="34.90" y="99.00" width="18.60" height="9.13" fill="none" stroke="#3c7a3c" stroke-width="0.9"/><path d="M69.70 112.05 v3.3 h-3.3z" fill="#2e2e2e"/><path d="M36.20 124.98 l1.9 2.0" fill="none" stroke="#1c1c90" stroke-width="1.3"/><path d="M37.90 127.08 l5.2 -5.6" fill="none" stroke="#2a2a9c" stroke-width="0.75"/><rect x="45.80" y="121.58" width="5.4" height="5.2" fill="#e8e480" stroke="#b0ac62" stroke-width="0.45" transform="rotate(-24 48.50 124.18)"/><path d="M36.50 133.92 l3.7 -3.7 l3.7 3.7 l-3.7 3.7z" fill="#f2e400" stroke="#6b6b10" stroke-width="0.5"/><circle cx="40.20" cy="133.92" r="1.25" fill="#4a4a20"/><rect x="37.60" y="141.85" width="5.4" height="5.2" fill="#e8e480" stroke="#b0ac62" stroke-width="0.45" transform="rotate(-24 40.30 144.45)"/><path d="M36.50 154.18 l3.7 -3.7 l3.7 3.7 l-3.7 3.7z" fill="#f2e400" stroke="#6b6b10" stroke-width="0.5"/><circle cx="40.20" cy="154.18" r="1.25" fill="#4a4a20"/><path d="M36.50 164.32 l3.7 -3.7 l3.7 3.7 l-3.7 3.7z" fill="#f2e400" stroke="#6b6b10" stroke-width="0.5"/><circle cx="40.20" cy="164.32" r="1.25" fill="#4a4a20"/><path d="M36.50 174.45 l3.7 -3.7 l3.7 3.7 l-3.7 3.7z" fill="#f2e400" stroke="#6b6b10" stroke-width="0.5"/><circle cx="40.20" cy="174.45" r="1.25" fill="#4a4a20"/><path d="M69.70 203.25 v3.3 h-3.3z" fill="#2e2e2e"/><path d="M68.00 294.45 v3.3 h-3.3z" fill="#2e2e2e"/><rect x="36.6" y="302.78" width="7.4" height="6.6" fill="#f4f4f4" stroke="#666" stroke-width="0.6"/><rect x="36.6" y="302.78" width="7.4" height="1.3" fill="#777"/><rect x="37.6" y="305.18" width="2.2" height="2.8" fill="#9aa"/><rect x="40.6" y="304.98" width="2.6" height="3.2" fill="#1818d8"/><rect x="36.6" y="312.92" width="7.4" height="6.6" fill="#f4f4f4" stroke="#666" stroke-width="0.6"/><rect x="36.6" y="312.92" width="7.4" height="1.3" fill="#777"/><rect x="37.6" y="315.32" width="2.2" height="2.8" fill="#9aa"/><rect x="40.6" y="315.12" width="2.6" height="3.2" fill="#1818d8"/><rect x="36.6" y="323.05" width="7.4" height="6.6" fill="#f4f4f4" stroke="#666" stroke-width="0.6"/><rect x="36.6" y="323.05" width="7.4" height="1.3" fill="#777"/><rect x="37.6" y="325.45" width="2.2" height="2.8" fill="#9aa"/><rect x="40.6" y="325.25" width="2.6" height="3.2" fill="#1818d8"/><path d="M69.70 334.98 v3.3 h-3.3z" fill="#2e2e2e"/><path d="M36.20 347.92 l1.9 2.0" fill="none" stroke="#1c1c90" stroke-width="1.3"/><path d="M37.90 350.02 l5.2 -5.6" fill="none" stroke="#2a2a9c" stroke-width="0.75"/><path d="M36.20 358.05 l1.9 2.0" fill="none" stroke="#1c1c90" stroke-width="1.3"/><path d="M37.90 360.15 l5.2 -5.6" fill="none" stroke="#2a2a9c" stroke-width="0.75"/><path d="M36.50 387.25 l3.7 -3.7 l3.7 3.7 l-3.7 3.7z" fill="#f2e400" stroke="#6b6b10" stroke-width="0.5"/><circle cx="40.20" cy="387.25" r="1.25" fill="#4a4a20"/><path d="M69.70 405.92 v3.3 h-3.3z" fill="#2e2e2e"/><path d="M36.50 458.18 l3.7 -3.7 l3.7 3.7 l-3.7 3.7z" fill="#f2e400" stroke="#6b6b10" stroke-width="0.5"/><circle cx="40.20" cy="458.18" r="1.25" fill="#4a4a20"/><path d="M69.70 497.12 v3.3 h-3.3z" fill="#2e2e2e"/><rect x="36.6" y="505.45" width="7.4" height="6.8" fill="#f4f4f4" stroke="#666" stroke-width="0.6"/><rect x="36.6" y="505.45" width="7.4" height="1.2" fill="#446"/><rect x="38.2" y="507.95" width="2.5" height="2.5" fill="#c01010"/><path d="M42.2 507.25 v4" stroke="#999" stroke-width="0.5"/></svg>
</div>
<div class="r" style="left:14.40px;top:80.30px;width:0.80px;height:459.70px;background:#8e8e8e;"></div>
<div class="r" style="left:331.20px;top:80.30px;width:0.80px;height:459.70px;background:#8e8e8e;"></div>
<div class="clip" style="left:334.2px;top:80px;width:680.90px;height:451.40px;">
<svg width="680.30" height="451.40" viewBox="334.2 80 680.30 451.40"><rect x="393.73" y="98.8" width="39.65" height="432.60" fill="#f6f6f6"/><rect x="413.30" y="98.8" width="0.5" height="432.60" fill="#fafafa"/><rect x="532.50" y="98.8" width="39.65" height="432.60" fill="#f6f6f6"/><rect x="552.08" y="98.8" width="0.5" height="432.60" fill="#fafafa"/><rect x="671.27" y="98.8" width="39.65" height="432.60" fill="#f6f6f6"/><rect x="690.85" y="98.8" width="0.5" height="432.60" fill="#fafafa"/><rect x="810.05" y="98.8" width="39.65" height="432.60" fill="#f6f6f6"/><rect x="829.62" y="98.8" width="0.5" height="432.60" fill="#fafafa"/><rect x="948.83" y="98.8" width="39.65" height="432.60" fill="#f6f6f6"/><rect x="968.40" y="98.8" width="0.5" height="432.60" fill="#fafafa"/><rect x="1087.60" y="98.8" width="39.65" height="432.60" fill="#f6f6f6"/><rect x="1107.17" y="98.8" width="0.5" height="432.60" fill="#fafafa"/><path d="M394.60 124.60 L436.45 124.60 L436.45 352.00" fill="none" stroke="#82b4ee" stroke-width="0.85"/><path d="M433.40 124.60 L433.40 160.00" fill="none" stroke="#82b4ee" stroke-width="0.75"/><path d="M446.00 185.40 L621.00 185.40 L621.00 215.40 L618.00 215.40" fill="none" stroke="#6ccbf5" stroke-width="0.8"/><path d="M609.60 216.20 L618.50 216.20 L618.50 270.00" fill="none" stroke="#bdbdbd" stroke-width="0.75"/><path d="M790.90 175.00 L793.60 175.00 L793.60 262.00" fill="none" stroke="#7030a0" stroke-width="0.7"/><path d="M473.10 134.45 L476.00 134.45 L476.00 139.63" fill="none" stroke="#7030a0" stroke-width="0.7"/><path d="M512.70 144.58 L515.70 144.58 L515.70 149.77" fill="none" stroke="#7030a0" stroke-width="0.7"/><path d="M512.70 164.85 L518.70 164.85 L518.70 170.03" fill="none" stroke="#8ccd4b" stroke-width="0.7"/><path d="M446.00 185.40 L453.10 185.40 L453.10 188.40" fill="none" stroke="#38b6f0" stroke-width="0.7"/><path d="M482.90 347.25 L487.30 347.25 L487.30 362.57" fill="none" stroke="#38b6f0" stroke-width="0.7"/><path d="M472.90 357.38 L487.30 357.38" fill="none" stroke="#38b6f0" stroke-width="0.7"/><path d="M582.20 367.52 L725.40 367.52 L725.40 413.23" fill="none" stroke="#38b6f0" stroke-width="0.7"/><path d="M582.20 367.52 L586.10 367.52 L586.10 372.70" fill="none" stroke="#38b6f0" stroke-width="0.7"/><path d="M642.00 377.65 L645.60 377.65 L645.60 382.83" fill="none" stroke="#38b6f0" stroke-width="0.7"/><path d="M721.25 387.78 L784.40 387.78 L784.40 423.37" fill="none" stroke="#38b6f0" stroke-width="0.7"/><path d="M731.20 387.78 L731.20 391.00" fill="none" stroke="#38b6f0" stroke-width="0.7"/><path d="M781.00 418.18 L784.40 418.18" fill="none" stroke="#38b6f0" stroke-width="0.7"/><path d="M860.30 428.32 L863.80 428.32 L863.80 433.50" fill="none" stroke="#38b6f0" stroke-width="0.7"/><path d="M999.40 438.45 L1002.50 438.45 L1002.50 453.00" fill="none" stroke="#38b6f0" stroke-width="0.7"/><rect x="334.70" y="101.05" width="765.30" height="1.3" fill="#666"/><rect x="334.70" y="101.05" width="1.2" height="5.4" fill="#3a3a3a"/><rect x="334.70" y="111.18" width="456.60" height="1.3" fill="#666"/><rect x="334.70" y="111.18" width="1.2" height="5.4" fill="#3a3a3a"/><rect x="790.10" y="111.18" width="1.2" height="5.4" fill="#3a3a3a"/><rect x="334.70" y="202.38" width="765.30" height="1.3" fill="#808080"/><rect x="334.70" y="202.38" width="1.2" height="5.4" fill="#3a3a3a"/><rect x="433.20" y="334.12" width="288.40" height="0.9" fill="#333"/><rect x="433.20" y="334.12" width="1.2" height="5.4" fill="#3a3a3a"/><rect x="720.40" y="334.12" width="1.2" height="5.4" fill="#3a3a3a"/><rect x="721.30" y="405.05" width="378.70" height="0.9" fill="#333"/><rect x="721.30" y="405.05" width="1.2" height="5.4" fill="#3a3a3a"/><rect x="334.2" y="122.2" width="60.40" height="4.7" fill="#a9cdf4"/><rect x="334.2" y="123.1" width="60.40" height="2.9" fill="#3a8ae0"/><rect x="433.10" y="131.50" width="40.00" height="5.90" fill="#7030a0"/><rect x="473.10" y="141.63" width="39.60" height="5.90" fill="#7030a0"/><rect x="473.10" y="143.13" width="13.90" height="2.3" fill="#2f8de0"/><rect x="512.70" y="151.77" width="79.10" height="5.90" fill="#7030a0"/><rect x="433.10" y="161.90" width="79.60" height="5.90" fill="#8ccd4b"/><rect x="512.70" y="172.03" width="278.20" height="5.90" fill="#7030a0"/><rect x="433.10" y="182.17" width="12.90" height="5.90" fill="#00aeef"/><rect x="334.20" y="212.82" width="275.60" height="5.00" fill="#bdbdbd"/><rect x="334.20" y="213.87" width="136.60" height="2.3" fill="#3a8ae0"/><rect x="790.50" y="222.70" width="309.50" height="5.90" fill="#00aeef"/><rect x="790.50" y="232.83" width="309.50" height="5.90" fill="#00aeef"/><rect x="790.50" y="242.97" width="309.50" height="5.90" fill="#00aeef"/><rect x="790.50" y="253.10" width="309.50" height="5.90" fill="#00aeef"/><rect x="790.50" y="263.23" width="309.50" height="5.90" fill="#00aeef"/><rect x="611.5" y="273.47" width="500" height="5.9" fill="#fee498"/><rect x="611.5" y="273.47" width="500" height="0.8" fill="#fbd25c"/><rect x="611.5" y="278.57" width="500" height="0.8" fill="#fbd25c"/><rect x="611.5" y="273.47" width="0.7" height="5.9" fill="#fbd25c"/><rect x="433.00" y="344.30" width="49.90" height="5.90" fill="#00aeef"/><rect x="433.00" y="345.80" width="49.90" height="2.3" fill="#2a8ade"/><rect x="433.00" y="354.43" width="39.90" height="5.90" fill="#00aeef"/><rect x="433.00" y="355.93" width="39.90" height="2.3" fill="#2a8ade"/><rect x="483.50" y="364.57" width="98.70" height="5.90" fill="#00aeef"/><rect x="483.50" y="366.07" width="23.10" height="2.3" fill="#2a8ade"/><rect x="582.90" y="374.70" width="59.10" height="5.90" fill="#00aeef"/><rect x="642.70" y="384.83" width="78.55" height="5.90" fill="#00aeef"/><rect x="721.25" y="415.23" width="59.75" height="5.90" fill="#00aeef"/><rect x="781.00" y="425.37" width="79.30" height="5.90" fill="#00aeef"/><rect x="861.00" y="435.50" width="138.40" height="5.90" fill="#00aeef"/><rect x="999.40" y="445.63" width="100.60" height="5.90" fill="#00aeef"/><rect x="999.6" y="456.32" width="100" height="2.4" fill="#9ccdf5"/><path d="M999.6 457.52 H1100" stroke="#3f93e0" stroke-width="1.5" stroke-dasharray="0.6 0.5"/><path d="M433.75 128.30 h5.40 l-2.70 3.20z" fill="#82b4ee"/><path d="M430.60 158.70 h5.40 l-2.70 3.20z" fill="#82b4ee"/><path d="M433.75 178.97 h5.40 l-2.70 3.20z" fill="#82b4ee"/><path d="M433.75 341.10 h5.40 l-2.70 3.20z" fill="#82b4ee"/><path d="M433.75 351.23 h5.40 l-2.70 3.20z" fill="#82b4ee"/><path d="M473.40 138.53 h5.20 l-2.60 3.10z" fill="#7030a0"/><path d="M513.10 148.67 h5.20 l-2.60 3.10z" fill="#7030a0"/><path d="M516.10 168.93 h5.20 l-2.60 3.10z" fill="#8ccd4b"/><path d="M791.00 219.60 h5.20 l-2.60 3.10z" fill="#7030a0"/><path d="M791.00 229.73 h5.20 l-2.60 3.10z" fill="#7030a0"/><path d="M791.00 239.87 h5.20 l-2.60 3.10z" fill="#7030a0"/><path d="M791.00 250.00 h5.20 l-2.60 3.10z" fill="#7030a0"/><path d="M791.00 260.13 h5.20 l-2.60 3.10z" fill="#7030a0"/><path d="M450.40 188.00 h5.40 l-2.70 3.10z" fill="#38b6f0"/><path d="M615.8 215.5 l3 -2.2 v4.4z" fill="#7fd2f7"/><path d="M615.70 269.87 h5.60 l-2.80 3.30z" fill="#b2b2b2"/><path d="M484.70 361.47 h5.20 l-2.60 3.10z" fill="#38b6f0"/><path d="M722.80 412.13 h5.20 l-2.60 3.10z" fill="#38b6f0"/><path d="M583.50 371.60 h5.20 l-2.60 3.10z" fill="#38b6f0"/><path d="M643.00 381.73 h5.20 l-2.60 3.10z" fill="#38b6f0"/><path d="M781.80 422.27 h5.20 l-2.60 3.10z" fill="#38b6f0"/><path d="M728.60 390.60 h5.20 l-2.60 3.10z" fill="#38b6f0"/><path d="M861.20 432.40 h5.20 l-2.60 3.10z" fill="#38b6f0"/><path d="M999.90 442.53 h5.20 l-2.60 3.10z" fill="#38b6f0"/><path d="M999.90 451.32 h5.20 l-2.60 3.10z" fill="#38b6f0"/><path d="M443.10 195.42 L446.10 192.42 L449.10 195.42 L446.10 198.42z" fill="#f00a0a"/><path d="M718.25 397.88 L721.25 394.88 L724.25 397.88 L721.25 400.88z" fill="#f00a0a"/><path d="M609.10 215.60 L611.90 212.80 L614.70 215.60 L611.90 218.40z" fill="#fbbc05"/><polygon points="433.30,161.65 434.14,163.89 436.53,164.00 434.66,165.49 435.30,167.80 433.30,166.48 431.30,167.80 431.94,165.49 430.07,164.00 432.46,163.89" fill="#1a1410"/><polygon points="512.90,161.65 513.74,163.89 516.13,164.00 514.26,165.49 514.90,167.80 512.90,166.48 510.90,167.80 511.54,165.49 509.67,164.00 512.06,163.89" fill="#1a1410"/></svg>
<div class="t" style="top:41.20px;font-size:6.9px;line-height:8.97px;color:#161616;font-weight:700;left:65.90px;transform:scaleX(0.9956);">G.C. General Management</div>
<div class="t" style="top:51.33px;font-size:6.9px;line-height:8.97px;color:#161616;font-weight:700;left:145.50px;transform:scaleX(1.0135);">G.C. Project Management,G.C. General Management[25%]</div>
<div class="t" style="top:61.46px;font-size:6.9px;line-height:8.97px;color:#161616;font-weight:700;left:184.80px;transform:scaleX(0.9964);">G.C. Project Management[25%],G.C Scheduler</div>
<div class="t" style="top:71.60px;font-size:6.9px;line-height:8.97px;color:#161616;font-weight:700;left:264.40px;transform:scaleX(1.0161);">G.C. General Management[10%],G.C. Project Management</div>
<div class="t" style="top:81.73px;font-size:6.9px;line-height:8.97px;color:#161616;font-weight:700;left:184.80px;transform:scaleX(1.0138);">G.C. Project Management[50%],G.C Procurement[50%]</div>
<div class="t" style="top:91.86px;font-size:6.9px;line-height:8.97px;color:#161616;font-weight:700;left:462.80px;transform:scaleX(1.0133);">G.C. Project Management[50%],G.C Procurement[50%]</div>
<div class="t" style="top:112.13px;font-size:6.9px;line-height:8.97px;color:#161616;font-weight:700;left:118.20px;transform:scaleX(1.2091);">9/9</div>
<div class="t" style="top:132.40px;font-size:6.9px;line-height:8.97px;color:#161616;font-weight:700;left:283.90px;transform:scaleX(0.9959);">Steel Erection Contractor Management</div>
<div class="t" style="top:254.10px;font-size:6.9px;line-height:8.97px;color:#161616;font-weight:700;left:66.70px;transform:scaleX(1.0114);">10.5 days</div>
<div class="t" style="top:264.13px;font-size:6.9px;line-height:8.97px;color:#161616;font-weight:700;left:155.80px;transform:scaleX(0.9638);">Electric Contractor</div>
<div class="t" style="top:274.26px;font-size:6.9px;line-height:8.97px;color:#161616;font-weight:700;left:145.50px;transform:scaleX(0.9966);">Plumbing Contractor</div>
<div class="t" style="top:284.40px;font-size:6.9px;line-height:8.97px;color:#161616;font-weight:700;left:254.80px;transform:scaleX(0.9914);">G.C. Superintendent,G.C. Labor Crew[10%]</div>
<div class="t" style="top:294.53px;font-size:6.9px;line-height:8.97px;color:#161616;font-weight:700;left:313.60px;transform:scaleX(0.9546);">G.C. Survey Crew</div>
<div class="t" style="top:304.66px;font-size:6.9px;line-height:8.97px;color:#161616;font-weight:700;left:393.50px;transform:scaleX(0.9913);">Site Grading Contractor,G.C. Labor Crew[10%]</div>
<div class="t" style="top:314.80px;font-size:6.9px;line-height:8.97px;color:#161616;font-weight:700;left:393.40px;transform:scaleX(1.1176);">9/23</div>
<div class="t" style="top:325.03px;font-size:6.9px;line-height:8.97px;color:#161616;font-weight:700;left:360.20px;transform:scaleX(1.0001);">35 days</div>
<div class="t" style="top:335.06px;font-size:6.9px;line-height:8.97px;color:#161616;font-weight:700;left:453.30px;transform:scaleX(0.9845);">Site Grading Contractor</div>
<div class="t" style="top:345.20px;font-size:6.9px;line-height:8.97px;color:#161616;font-weight:700;left:532.20px;transform:scaleX(0.9845);">Site Grading Contractor</div>
<div class="t" style="top:355.33px;font-size:6.9px;line-height:8.97px;color:#161616;font-weight:700;left:671.30px;transform:scaleX(0.9845);">Site Grading Contractor</div>
</div>
<div class="r" style="left:334.20px;top:80.30px;width:680.30px;height:0.80px;background:#8c8c8c;"></div>
<div class="r" style="left:334.20px;top:98.10px;width:680.30px;height:0.80px;background:#9c9c9c;"></div>
<div class="r" style="left:334.00px;top:80.30px;width:0.80px;height:459.70px;background:#a8a8a8;"></div>
<div class="r" style="left:1014.20px;top:80.30px;width:0.80px;height:459.70px;background:#8e8e8e;"></div>
<div class="t" style="top:90.37px;font-size:6.2px;line-height:8.06px;color:#4a4a4a;left:194.16px;width:300px;text-align:center;"><span style="display:inline-block;transform-origin:center center;">W</span></div>
<div class="t" style="top:90.37px;font-size:6.2px;line-height:8.06px;color:#4a4a4a;left:213.99px;width:300px;text-align:center;"><span style="display:inline-block;transform-origin:center center;">T</span></div>
<div class="t" style="top:90.37px;font-size:6.2px;line-height:8.06px;color:#4a4a4a;left:233.81px;width:300px;text-align:center;"><span style="display:inline-block;transform-origin:center center;">F</span></div>
<div class="t" style="top:90.37px;font-size:6.2px;line-height:8.06px;color:#4a4a4a;left:253.64px;width:300px;text-align:center;"><span style="display:inline-block;transform-origin:center center;">S</span></div>
<div class="t" style="top:90.37px;font-size:6.2px;line-height:8.06px;color:#4a4a4a;left:273.46px;width:300px;text-align:center;"><span style="display:inline-block;transform-origin:center center;">S</span></div>
<div class="t" style="top:90.37px;font-size:6.2px;line-height:8.06px;color:#4a4a4a;left:293.29px;width:300px;text-align:center;"><span style="display:inline-block;transform-origin:center center;">M</span></div>
<div class="t" style="top:90.37px;font-size:6.2px;line-height:8.06px;color:#4a4a4a;left:313.11px;width:300px;text-align:center;"><span style="display:inline-block;transform-origin:center center;">T</span></div>
<div class="t" style="top:90.37px;font-size:6.2px;line-height:8.06px;color:#4a4a4a;left:332.94px;width:300px;text-align:center;"><span style="display:inline-block;transform-origin:center center;">W</span></div>
<div class="t" style="top:90.37px;font-size:6.2px;line-height:8.06px;color:#4a4a4a;left:352.76px;width:300px;text-align:center;"><span style="display:inline-block;transform-origin:center center;">T</span></div>
<div class="t" style="top:90.37px;font-size:6.2px;line-height:8.06px;color:#4a4a4a;left:372.59px;width:300px;text-align:center;"><span style="display:inline-block;transform-origin:center center;">F</span></div>
<div class="t" style="top:90.37px;font-size:6.2px;line-height:8.06px;color:#4a4a4a;left:392.41px;width:300px;text-align:center;"><span style="display:inline-block;transform-origin:center center;">S</span></div>
<div class="t" style="top:90.37px;font-size:6.2px;line-height:8.06px;color:#4a4a4a;left:412.24px;width:300px;text-align:center;"><span style="display:inline-block;transform-origin:center center;">S</span></div>
<div class="t" style="top:90.37px;font-size:6.2px;line-height:8.06px;color:#4a4a4a;left:432.06px;width:300px;text-align:center;"><span style="display:inline-block;transform-origin:center center;">M</span></div>
<div class="t" style="top:90.37px;font-size:6.2px;line-height:8.06px;color:#4a4a4a;left:451.89px;width:300px;text-align:center;"><span style="display:inline-block;transform-origin:center center;">T</span></div>
<div class="t" style="top:90.37px;font-size:6.2px;line-height:8.06px;color:#4a4a4a;left:471.71px;width:300px;text-align:center;"><span style="display:inline-block;transform-origin:center center;">W</span></div>
<div class="t" style="top:90.37px;font-size:6.2px;line-height:8.06px;color:#4a4a4a;left:491.54px;width:300px;text-align:center;"><span style="display:inline-block;transform-origin:center center;">T</span></div>
<div class="t" style="top:90.37px;font-size:6.2px;line-height:8.06px;color:#4a4a4a;left:511.36px;width:300px;text-align:center;"><span style="display:inline-block;transform-origin:center center;">F</span></div>
<div class="t" style="top:90.37px;font-size:6.2px;line-height:8.06px;color:#4a4a4a;left:531.19px;width:300px;text-align:center;"><span style="display:inline-block;transform-origin:center center;">S</span></div>
<div class="t" style="top:90.37px;font-size:6.2px;line-height:8.06px;color:#4a4a4a;left:551.01px;width:300px;text-align:center;"><span style="display:inline-block;transform-origin:center center;">S</span></div>
<div class="t" style="top:90.37px;font-size:6.2px;line-height:8.06px;color:#4a4a4a;left:570.84px;width:300px;text-align:center;"><span style="display:inline-block;transform-origin:center center;">M</span></div>
<div class="t" style="top:90.37px;font-size:6.2px;line-height:8.06px;color:#4a4a4a;left:590.66px;width:300px;text-align:center;"><span style="display:inline-block;transform-origin:center center;">T</span></div>
<div class="t" style="top:90.37px;font-size:6.2px;line-height:8.06px;color:#4a4a4a;left:610.49px;width:300px;text-align:center;"><span style="display:inline-block;transform-origin:center center;">W</span></div>
<div class="t" style="top:90.37px;font-size:6.2px;line-height:8.06px;color:#4a4a4a;left:630.31px;width:300px;text-align:center;"><span style="display:inline-block;transform-origin:center center;">T</span></div>
<div class="t" style="top:90.37px;font-size:6.2px;line-height:8.06px;color:#4a4a4a;left:650.14px;width:300px;text-align:center;"><span style="display:inline-block;transform-origin:center center;">F</span></div>
<div class="t" style="top:90.37px;font-size:6.2px;line-height:8.06px;color:#4a4a4a;left:669.96px;width:300px;text-align:center;"><span style="display:inline-block;transform-origin:center center;">S</span></div>
<div class="t" style="top:90.37px;font-size:6.2px;line-height:8.06px;color:#4a4a4a;left:689.79px;width:300px;text-align:center;"><span style="display:inline-block;transform-origin:center center;">S</span></div>
<div class="t" style="top:90.37px;font-size:6.2px;line-height:8.06px;color:#4a4a4a;left:709.61px;width:300px;text-align:center;"><span style="display:inline-block;transform-origin:center center;">M</span></div>
<div class="t" style="top:90.37px;font-size:6.2px;line-height:8.06px;color:#4a4a4a;left:729.44px;width:300px;text-align:center;"><span style="display:inline-block;transform-origin:center center;">T</span></div>
<div class="t" style="top:90.37px;font-size:6.2px;line-height:8.06px;color:#4a4a4a;left:749.26px;width:300px;text-align:center;"><span style="display:inline-block;transform-origin:center center;">W</span></div>
<div class="t" style="top:90.37px;font-size:6.2px;line-height:8.06px;color:#4a4a4a;left:769.09px;width:300px;text-align:center;"><span style="display:inline-block;transform-origin:center center;">T</span></div>
<div class="t" style="top:90.37px;font-size:6.2px;line-height:8.06px;color:#4a4a4a;left:788.91px;width:300px;text-align:center;"><span style="display:inline-block;transform-origin:center center;">F</span></div>
<div class="t" style="top:90.37px;font-size:6.2px;line-height:8.06px;color:#4a4a4a;left:808.74px;width:300px;text-align:center;"><span style="display:inline-block;transform-origin:center center;">S</span></div>
<div class="t" style="top:90.37px;font-size:6.2px;line-height:8.06px;color:#4a4a4a;left:828.56px;width:300px;text-align:center;"><span style="display:inline-block;transform-origin:center center;">S</span></div>
<div class="t" style="top:90.37px;font-size:6.2px;line-height:8.06px;color:#4a4a4a;left:848.39px;width:300px;text-align:center;"><span style="display:inline-block;transform-origin:center center;">M</span></div>
<svg width="1024" height="100"><rect x="353.68" y="90.2" width="0.8" height="8" fill="#a2a2a2"/><rect x="373.50" y="90.2" width="0.8" height="8" fill="#a2a2a2"/><rect x="393.33" y="90.2" width="0.8" height="8" fill="#a2a2a2"/><rect x="413.15" y="81" width="0.8" height="17.2" fill="#9a9a9a"/><rect x="432.98" y="90.2" width="0.8" height="8" fill="#a2a2a2"/><rect x="452.80" y="90.2" width="0.8" height="8" fill="#a2a2a2"/><rect x="472.62" y="90.2" width="0.8" height="8" fill="#a2a2a2"/><rect x="492.45" y="90.2" width="0.8" height="8" fill="#a2a2a2"/><rect x="512.27" y="90.2" width="0.8" height="8" fill="#a2a2a2"/><rect x="532.10" y="90.2" width="0.8" height="8" fill="#a2a2a2"/><rect x="551.93" y="81" width="0.8" height="17.2" fill="#9a9a9a"/><rect x="571.75" y="90.2" width="0.8" height="8" fill="#a2a2a2"/><rect x="591.58" y="90.2" width="0.8" height="8" fill="#a2a2a2"/><rect x="611.40" y="90.2" width="0.8" height="8" fill="#a2a2a2"/><rect x="631.23" y="90.2" width="0.8" height="8" fill="#a2a2a2"/><rect x="651.05" y="90.2" width="0.8" height="8" fill="#a2a2a2"/><rect x="670.88" y="90.2" width="0.8" height="8" fill="#a2a2a2"/><rect x="690.70" y="81" width="0.8" height="17.2" fill="#9a9a9a"/><rect x="710.52" y="90.2" width="0.8" height="8" fill="#a2a2a2"/><rect x="730.35" y="90.2" width="0.8" height="8" fill="#a2a2a2"/><rect x="750.18" y="90.2" width="0.8" height="8" fill="#a2a2a2"/><rect x="770.00" y="90.2" width="0.8" height="8" fill="#a2a2a2"/><rect x="789.83" y="90.2" width="0.8" height="8" fill="#a2a2a2"/><rect x="809.65" y="90.2" width="0.8" height="8" fill="#a2a2a2"/><rect x="829.48" y="81" width="0.8" height="17.2" fill="#9a9a9a"/><rect x="849.30" y="90.2" width="0.8" height="8" fill="#a2a2a2"/><rect x="869.12" y="90.2" width="0.8" height="8" fill="#a2a2a2"/><rect x="888.95" y="90.2" width="0.8" height="8" fill="#a2a2a2"/><rect x="908.77" y="90.2" width="0.8" height="8" fill="#a2a2a2"/><rect x="928.60" y="90.2" width="0.8" height="8" fill="#a2a2a2"/><rect x="948.43" y="90.2" width="0.8" height="8" fill="#a2a2a2"/><rect x="968.25" y="81" width="0.8" height="17.2" fill="#9a9a9a"/><rect x="988.07" y="90.2" width="0.8" height="8" fill="#a2a2a2"/><rect x="1007.90" y="90.2" width="0.8" height="8" fill="#a2a2a2"/></svg>
<div class="t" style="top:81.91px;font-size:6.6px;line-height:8.58px;color:#444;left:415.70px;transform:scaleX(0.8781);">Sep 8 '24</div>
<div class="t" style="top:81.91px;font-size:6.6px;line-height:8.58px;color:#444;left:554.70px;transform:scaleX(0.8682);">Sep 15 '24</div>
<div class="t" style="top:81.91px;font-size:6.6px;line-height:8.58px;color:#444;left:693.50px;transform:scaleX(0.8682);">Sep 22 '24</div>
<div class="t" style="top:81.91px;font-size:6.6px;line-height:8.58px;color:#444;left:832.20px;transform:scaleX(0.8682);">Sep 29 '24</div>
<div class="t" style="top:81.91px;font-size:6.6px;line-height:8.58px;color:#444;left:971.00px;transform:scaleX(0.9088);">Oct 6 '24</div>
<div class="r" style="left:1016.00px;top:89.30px;width:6.90px;height:42.70px;background:#ffffff;border:0.6px solid #dedede;box-sizing:border-box;"></div>
<svg width="1024" height="551"><path d="M1016.6 86.4 h4.6 l-2.3 -2.3z" fill="#6a6a6a"/></svg>
<div class="r" style="left:0.00px;top:540.00px;width:1024.00px;height:11.00px;background:#2f7929;"></div>
<div class="r" style="left:0.00px;top:549.70px;width:1024.00px;height:1.30px;background:#d5e3d3;"></div>
<div class="t" style="top:541.80px;font-size:6.3px;line-height:8.19px;color:#f4f8f2;left:2.80px;transform:scaleX(0.8791);">File successfully loaded.</div>
<div class="r" style="left:15.20px;top:531.40px;width:316.00px;height:8.60px;background:#ffffff;"></div>
<div class="r" style="left:24.60px;top:532.30px;width:0.60px;height:7.70px;background:#d6d6d6;"></div>
<div class="r" style="left:321.70px;top:532.30px;width:0.60px;height:7.70px;background:#dcdcdc;"></div>
<div class="r" style="left:15.20px;top:532.00px;width:10.00px;height:0.50px;background:#e2e2e2;"></div>
<div class="r" style="left:321.70px;top:532.00px;width:9.40px;height:0.50px;background:#e2e2e2;"></div>
<div class="r" style="left:343.70px;top:532.30px;width:28.80px;height:7.70px;background:#ffffff;border:0.6px solid #dadada;border-bottom:none;box-sizing:border-box;"></div>
<div class="r" style="left:335.00px;top:532.10px;width:8.70px;height:0.50px;background:#e4e4e4;"></div>
<div class="r" style="left:1005.40px;top:532.10px;width:9.00px;height:0.50px;background:#dcdcdc;"></div>
<div class="r" style="left:1005.40px;top:532.10px;width:0.50px;height:7.90px;background:#dcdcdc;"></div>
<div class="r" style="left:1015.80px;top:522.20px;width:7.00px;height:8.80px;background:#ffffff;border:0.5px solid #dcdcdc;box-sizing:border-box;"></div>
<svg width="1024" height="551"><path d="M20.3 536 l2.5 -2.1 v4.2z" fill="#7a7a7a"/><path d="M327.4 535.9 l-2.6 -2.2 v4.4z" fill="#7a7a7a"/><path d="M338.4 535.9 l2.6 -2.2 v4.4z" fill="#7a7a7a"/><path d="M1010.6 535.8 l-2.6 -2.2 v4.4z" fill="#7a7a7a"/><path d="M1017.2 526.3 h4.4 l-2.2 2.2z" fill="#6e6e6e"/></svg>
</div>
</body></html>
